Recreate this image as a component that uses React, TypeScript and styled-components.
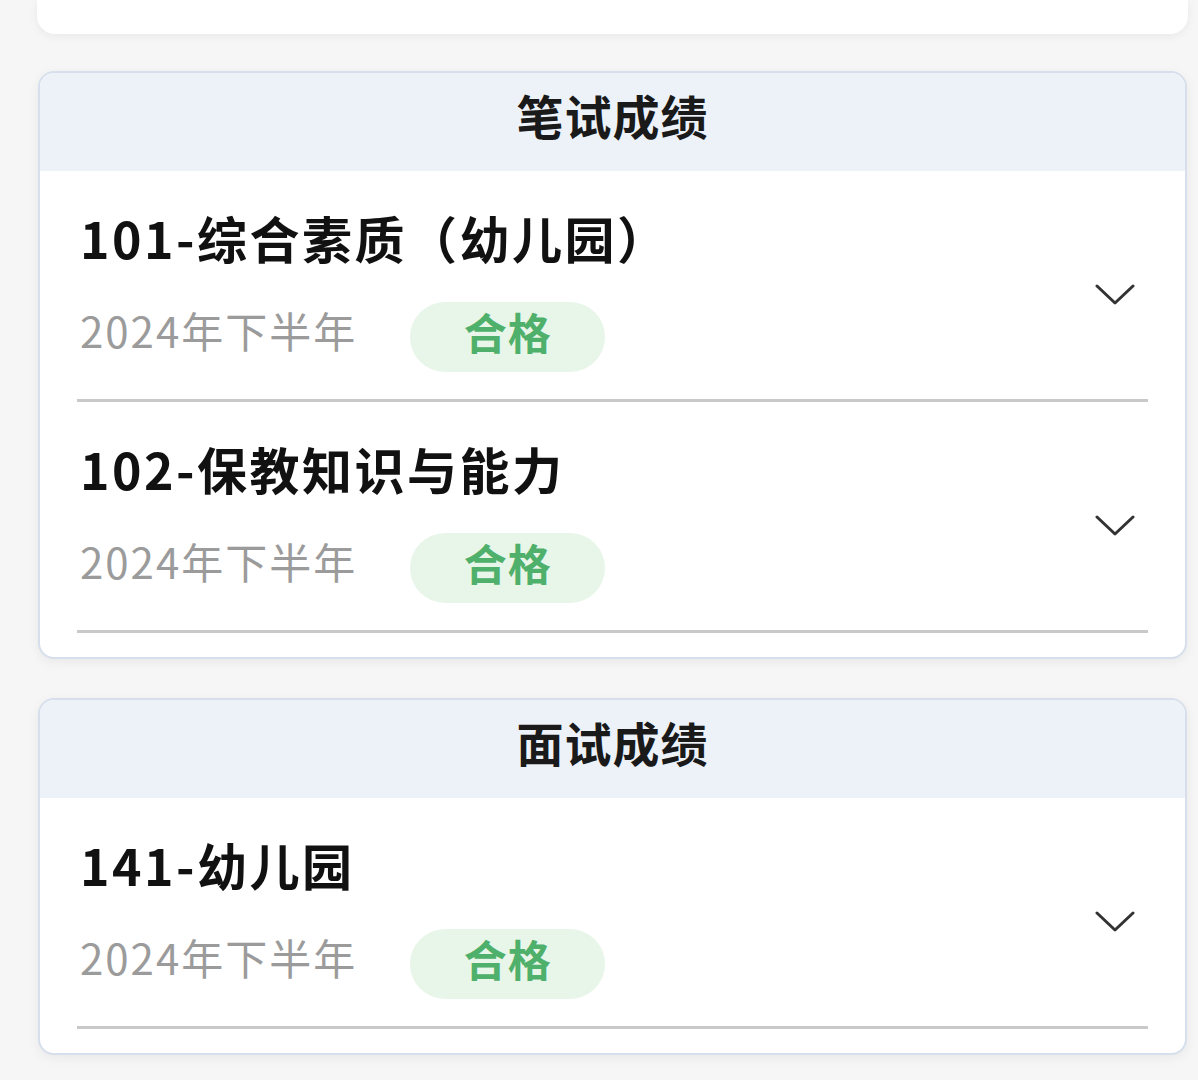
import styled, { createGlobalStyle } from 'styled-components';

const GlobalStyle = createGlobalStyle`
  body {
    margin: 0;
    background: #f6f6f6;
    font-family: 'Noto Sans CJK SC', 'Noto Sans', sans-serif;
  }
`;

const Page = styled.div`
  display: flex;
  flex-direction: column;
  gap: 39px;
  padding: 0 11px 30px 38px;
  width: 1198px;
  box-sizing: border-box;
`;

const TopCard = styled.div`
  height: 34px;
  margin-left: -1px;
  margin-right: -1px;
  margin-bottom: -2px;
  background: #fff;
  border-radius: 0 0 18px 18px;
  box-shadow: 0 2px 10px rgba(0, 0, 0, 0.06);
`;

const Card = styled.section`
  background: #fff;
  border: 2px solid #d6dfeb;
  border-radius: 16px;
  overflow: hidden;
  padding-bottom: 24px;
  box-shadow: 0 3px 12px rgba(0, 0, 0, 0.06);
`;

const CardHeader = styled.h2`
  margin: 0;
  height: 98px;
  box-sizing: border-box;
  padding-bottom: 16px;
  display: flex;
  align-items: center;
  justify-content: center;
  background: #edf2f9;
  font-size: 47px;
  font-weight: 700;
  color: #1a1a1a;
  letter-spacing: 1px;
`;

const List = styled.div`
  padding: 0 37px;
`;

const Row = styled.div`
  display: flex;
  align-items: center;
  padding: 38px 0 27px;
  border-bottom: 3px solid #c9c9c9;
`;

const Info = styled.div`
  flex: 1;
  display: flex;
  flex-direction: column;
  gap: 33px;
  padding-left: 3px;
`;

const Title = styled.div`
  height: 60px;
  line-height: 56px;
  font-size: 50px;
  font-weight: 700;
  color: #111;
  letter-spacing: 2.5px;
`;

const Meta = styled.div`
  display: flex;
  align-items: center;
  gap: 53px;
`;

const Term = styled.span`
  font-size: 42px;
  line-height: 56px;
  padding-bottom: 14px;
  color: #9b9b9b;
  letter-spacing: 2px;
`;

const Badge = styled.span<{ $pass: boolean }>`
  width: 195px;
  height: 70px;
  box-sizing: border-box;
  padding-bottom: 12px;
  border-radius: 35px;
  display: flex;
  align-items: center;
  justify-content: center;
  background: ${({ $pass }) => ($pass ? '#e8f5e9' : '#fdeaea')};
  color: ${({ $pass }) => ($pass ? '#4fb06b' : '#e05555')};
  font-size: 43px;
  font-weight: 700;
  letter-spacing: 1px;
`;

const Toggle = styled.button`
  border: 0;
  background: none;
  padding: 0;
  margin: 8px 13px 0 0;
  display: flex;
  cursor: pointer;
`;

type Subject = {
  name: string;
  term: string;
  pass: boolean;
};

const written: Subject[] = [
  { name: '101-综合素质（幼儿园）', term: '2024年下半年', pass: true },
  { name: '102-保教知识与能力', term: '2024年下半年', pass: true },
];

const interview: Subject[] = [
  { name: '141-幼儿园', term: '2024年下半年', pass: true },
];

const Chevron = () => (
  <svg width="40" height="24" viewBox="0 0 40 24" fill="none">
    <polyline
      points="2,3 20,20 38,3"
      stroke="#333"
      strokeWidth="3"
      strokeLinecap="round"
      strokeLinejoin="round"
    />
  </svg>
);

const ScoreCard = ({ title, items }: { title: string; items: Subject[] }) => (
  <Card>
    <CardHeader>{title}</CardHeader>
    <List>
      {items.map((s) => (
        <Row key={s.name}>
          <Info>
            <Title>{s.name}</Title>
            <Meta>
              <Term>{s.term}</Term>
              <Badge $pass={s.pass}>{s.pass ? '合格' : '不合格'}</Badge>
            </Meta>
          </Info>
          <Toggle aria-label="展开">
            <Chevron />
          </Toggle>
        </Row>
      ))}
    </List>
  </Card>
);

export default function App() {
  return (
    <>
      <GlobalStyle />
      <Page>
        <TopCard />
        <ScoreCard title="笔试成绩" items={written} />
        <ScoreCard title="面试成绩" items={interview} />
      </Page>
    </>
  );
}
